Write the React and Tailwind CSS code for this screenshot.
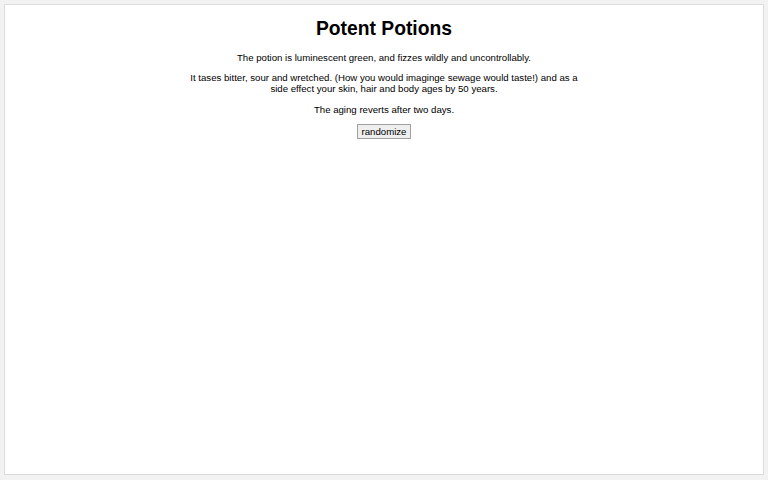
import React, { useState } from 'react';

const potions = [
  {
    look: 'The potion is luminescent green, and fizzes wildly and uncontrollably.',
    taste:
      'It tases bitter, sour and wretched. (How you would imaginge sewage would taste!) and as a side effect your skin, hair and body ages by 50 years.',
    end: 'The aging reverts after two days.',
  },
];

export default function App() {
  const [idx, setIdx] = useState(0);
  const p = potions[idx];

  return (
    <div className="h-[480px] w-[768px] bg-[#f2f2f2] p-1 font-['Liberation_Sans',Arial,sans-serif] text-black">
      <div className="h-[471px] border border-[#dcdcdc] bg-white">
        <div className="mx-auto flex w-[392px] flex-col items-center pt-[11px] text-center">
          <h1 className="text-[19.3px] font-bold leading-[25px]">Potent Potions</h1>
          <p className="mt-[11px] text-[9.65px] leading-[11px]">{p.look}</p>
          <p className="mt-[9px] text-[9.65px] leading-[11px]">{p.taste}</p>
          <p className="mt-[10px] text-[9.65px] leading-[11px]">{p.end}</p>
          <button
            onClick={() => setIdx((idx + 1) % potions.length)}
            className="mt-[9px] border border-[#a0a0a0] bg-[#efefef] px-[4px] py-[1px] text-[9.65px] leading-[11px]"
          >
            randomize
          </button>
        </div>
      </div>
    </div>
  );
}
